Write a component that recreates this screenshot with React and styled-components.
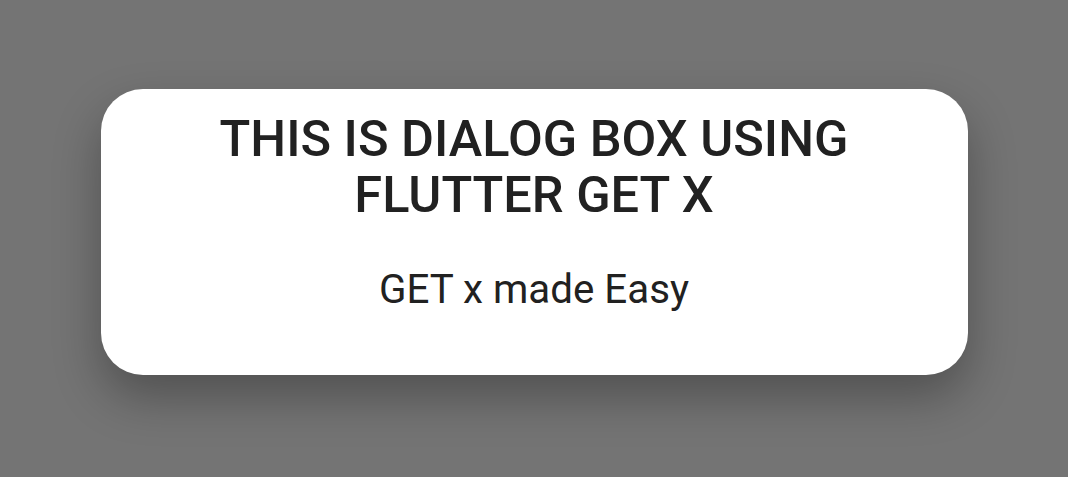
import styled, { createGlobalStyle } from 'styled-components'

const GlobalStyle = createGlobalStyle`
  html, body {
    margin: 0;
    padding: 0;
    background: #747474;
  }
  body {
    font-family: Roboto, "Noto Sans", sans-serif;
  }
`

const Backdrop = styled.div`
  width: 100vw;
  height: 100vh;
  display: flex;
  justify-content: center;
  align-items: flex-start;
  background: #747474;
  overflow: hidden;
`

const Dialog = styled.div`
  margin-top: 89px;
  width: 867px;
  box-sizing: border-box;
  padding: 22px 40px 61px;
  background: #ffffff;
  border-radius: 42px;
  box-shadow: 0 22px 48px rgba(0, 0, 0, 0.3);
  display: flex;
  flex-direction: column;
  align-items: center;
  text-align: center;
`

const Title = styled.h1`
  margin: 0;
  font-size: 50.5px;
  line-height: 56px;
  font-weight: 500;
  color: #212121;
`

const Message = styled.p`
  margin: 43px 0 0;
  font-size: 40.3px;
  line-height: 48px;
  font-weight: 400;
  color: #212121;
`

const App = () => {
  return (
    <>
      <GlobalStyle />
      <Backdrop>
        <Dialog>
          <Title>
            THIS IS DIALOG BOX USING
            <br />
            FLUTTER GET X
          </Title>
          <Message>GET x made Easy</Message>
        </Dialog>
      </Backdrop>
    </>
  )
}

export default App
